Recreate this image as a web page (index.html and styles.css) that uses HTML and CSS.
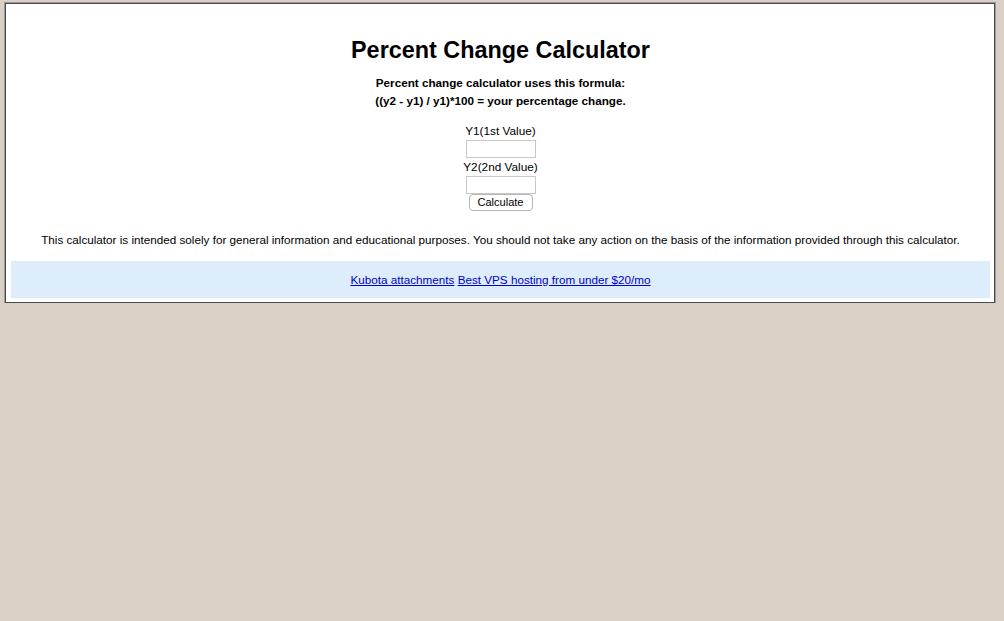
FILE: index.html
```html
<!DOCTYPE html>
<html>
<head>
<meta charset="utf-8">
<title>Percent Change Calculator</title>
<link rel="stylesheet" href="styles.css">
</head>
<body>
<div class="panel">
  <h1 class="title">Percent Change Calculator</h1>
  <p class="formula">Percent change calculator uses this formula:<br>((y2 - y1) / y1)*100 = your percentage change.</p>
  <form class="calc">
    <label class="lbl" for="y1">Y1(1st Value)</label>
    <input class="field" id="y1" type="text">
    <label class="lbl" for="y2">Y2(2nd Value)</label>
    <input class="field" id="y2" type="text">
    <button class="btn" type="button">Calculate</button>
  </form>
  <p class="disclaimer">This calculator is intended solely for general information and educational purposes. You should not take any action on the basis of the information provided through this calculator.</p>
  <div class="links">
    <a href="#">Kubota attachments</a> <a href="#">Best VPS hosting from under $20/mo</a>
  </div>
</div>
</body>
</html>
```
FILE: styles.css
```css
html, body {
  margin: 0;
  padding: 0;
}
body {
  background: #d9d1c6;
  font-family: "Liberation Sans", Arial, sans-serif;
  color: #000;
  padding: 3px 9px 0 5px;
}
.panel {
  background: #fff;
  border: 1px solid #4a4a4a;
  box-shadow: 0 0 0 1px #9a9a9a;
  padding: 32px 4px 4px 5px;
  text-align: center;
}
.title {
  font-size: 23.4px;
  font-weight: bold;
  line-height: 28px;
  margin: 0;
}
.formula {
  font-size: 11.7px;
  font-weight: bold;
  line-height: 18px;
  margin: 10px 0 0 0;
}
.calc {
  display: flex;
  flex-direction: column;
  align-items: center;
  margin-top: 12px;
}
.lbl {
  font-size: 11.8px;
  line-height: 18px;
  height: 18px;
}
.field {
  box-sizing: border-box;
  width: 70px;
  height: 18px;
  border: 1px solid #c8c8c8;
  padding: 0;
  margin: 0;
  background: #fff;
}
.btn {
  box-sizing: border-box;
  margin-top: 0;
  width: 64px;
  height: 17px;
  padding: 0;
  font-family: "Liberation Sans", Arial, sans-serif;
  font-size: 11px;
  line-height: 15px;
  background: #fff;
  border: 1px solid #b5b5b5;
  border-radius: 4px;
  color: #000;
}
.disclaimer {
  font-size: 11.7px;
  line-height: 14px;
  margin: 22px 0 0 0;
}
.links {
  background: #deedfb;
  margin-top: 14px;
  height: 37px;
  line-height: 37px;
  font-size: 11.7px;
}
.links a {
  color: #0000cc;
  text-decoration: underline;
}
```
